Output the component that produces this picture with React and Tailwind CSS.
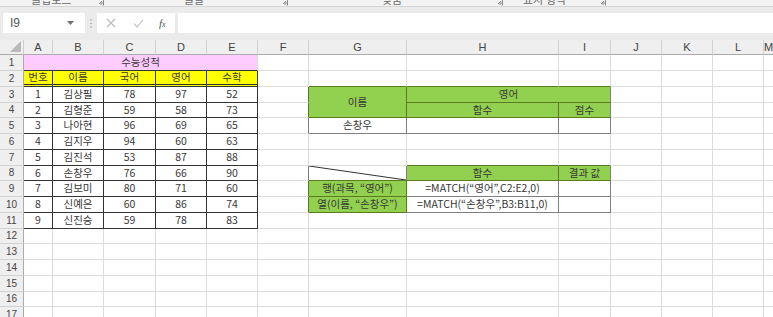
import React from 'react';

const COLS = ['A', 'B', 'C', 'D', 'E', 'F', 'G', 'H', 'I', 'J', 'K', 'L', 'M'];
const ROW_COUNT = 17;

const SCORES = [
  ['1', '김상필', '78', '97', '52'],
  ['2', '김형준', '59', '58', '73'],
  ['3', '나아현', '96', '69', '65'],
  ['4', '김지우', '94', '60', '63'],
  ['5', '김진석', '53', '87', '88'],
  ['6', '손창우', '76', '66', '90'],
  ['7', '김보미', '80', '71', '60'],
  ['8', '신예은', '60', '86', '74'],
  ['9', '신진승', '59', '78', '83'],
];

const TEXT = {
  A1: '수능성적',
  A2: '번호', B2: '이름', C2: '국어', D2: '영어', E2: '수학',
  G3: '이름', H3: '영어', H4: '함수', I4: '점수', G5: '손창우',
  H8: '함수', I8: '결과 값',
  G9: '행(과목, “영어”)', H9: '=MATCH(“영어”,C2:E2,0)',
  G10: '열(이름, “손창우”)', H10: '=MATCH(“손창우”,B3:B11,0)',
};
SCORES.forEach((row, i) => {
  row.forEach((v, j) => { TEXT[COLS[j] + (i + 3)] = v; });
});

// merged cells: covered cells are skipped
const SPAN = { A1: 'col-span-5', G3: 'row-span-2', H3: 'col-span-2' };
const COVERED = ['B1', 'C1', 'D1', 'E1', 'G4', 'I3'];

const GREEN = ['G3', 'H3', 'H4', 'I4', 'H8', 'I8', 'G9', 'G10'];

const RIGHT = {
  grid: 'border-r-[#dcdcdc]',
  t1: 'border-r-[#333333]',
  dark: 'border-r-[#808080]',
  olive: 'border-r-[#5b7b1e]',
};
const BOTTOM = {
  grid: 'border-b-[#dcdcdc]',
  t1: 'border-b-[#333333]',
  dbl: 'border-b-[3px] border-double border-b-[#333333]',
  dark: 'border-b-[#808080]',
  olive: 'border-b-[#5b7b1e]',
};

const OVERRIDE = {
  F3: { r: 'olive' }, F4: { r: 'olive' }, F5: { r: 'dark' },
  G2: { b: 'olive' }, H2: { b: 'olive' }, I2: { b: 'olive' },
  G3: { r: 'olive', b: 'olive' },
  H3: { r: 'dark', b: 'olive' },
  H4: { r: 'olive', b: 'olive' },
  I4: { r: 'dark', b: 'olive' },
  G5: { r: 'dark', b: 'dark' }, H5: { r: 'dark', b: 'dark' }, I5: { r: 'dark', b: 'dark' },
  H7: { b: 'olive' }, I7: { b: 'olive' },
  F8: { r: 'dark' }, F9: { r: 'olive' }, F10: { r: 'olive' },
  G8: { r: 'dark', b: 'olive' },
  H8: { r: 'olive', b: 'olive' },
  I8: { r: 'dark', b: 'olive' },
  G9: { r: 'olive', b: 'olive' },
  H9: { r: 'dark', b: 'dark' }, I9: { r: 'dark', b: 'dark' },
  G10: { r: 'olive', b: 'olive' },
  H10: { r: 'dark', b: 'dark' }, I10: { r: 'dark', b: 'dark' },
};

const cellBorders = (col, row, key) => {
  const c = COLS.indexOf(col);
  if (c <= 4 && row >= 2 && row <= 11) return { r: 't1', b: row === 2 ? 'dbl' : 't1' };
  if (key === 'A1') return { r: 'grid', b: 't1' };
  return { r: 'grid', b: 'grid', ...(OVERRIDE[key] || {}) };
};

const cellBg = (col, row, key) => {
  if (key === 'A1') return 'bg-[#ffccff]';
  if (row === 2 && COLS.indexOf(col) <= 4) return 'bg-[#ffff00]';
  if (GREEN.includes(key)) return 'bg-[#92d050]';
  return 'bg-white';
};

const Launcher = () => (
  <svg width="7" height="7" viewBox="0 0 7 7" className="mt-[-1px]">
    <path d="M0.5 0.5h6v6" fill="none" stroke="#8a8a8a" />
    <path d="M2 5l3-3M3 5h2v-2" fill="none" stroke="#8a8a8a" />
  </svg>
);

const Ribbon = () => (
  <div className="h-[7px] bg-[#f3f3f3] border-b border-[#d6d6d6] overflow-hidden flex text-[11px] leading-none text-[#6a6a6a]">
    <div className="w-[31px]" />
    <div className="w-[66px] mt-[-6px]">클립보드</div>
    <div className="w-[87px]"><Launcher /></div>
    <div className="w-[97px] mt-[-6px]">글꼴</div>
    <div className="w-[101px]"><Launcher /></div>
    <div className="w-[114px] mt-[-6px]">맞춤</div>
    <div className="w-[27px]"><Launcher /></div>
    <div className="w-[76px] mt-[-6px]">표시 형식</div>
    <div><Launcher /></div>
  </div>
);

const FormulaBar = () => (
  <div className="h-[33px] bg-[#ebebeb] flex items-start pt-[6px]">
    <div className="ml-[3px] w-[82px] h-[20px] bg-white flex items-center justify-between pl-[7px] pr-[11px]">
      <span className="text-[12px] text-[#555] font-['Liberation_Sans',sans-serif]">I9</span>
      <svg width="7" height="4" viewBox="0 0 7 4"><path d="M0 0h7L3.5 4z" fill="#707070" /></svg>
    </div>
    <div className="w-[12px] h-[20px] flex items-center justify-center">
      <svg width="2" height="9" viewBox="0 0 2 9">
        <circle cx="1" cy="1" r="0.8" fill="#a0a0a0" />
        <circle cx="1" cy="4.5" r="0.8" fill="#a0a0a0" />
        <circle cx="1" cy="8" r="0.8" fill="#a0a0a0" />
      </svg>
    </div>
    <div className="w-[78px] h-[20px] bg-white flex items-center">
      <svg width="10" height="10" viewBox="0 0 10 10" className="ml-[9px]">
        <path d="M1 1l8 8M9 1l-8 8" stroke="#b8b8b8" strokeWidth="1.1" />
      </svg>
      <svg width="11" height="9" viewBox="0 0 11 9" className="ml-[17px]">
        <path d="M1 4.5l3 3.5 6-7" fill="none" stroke="#b8b8b8" strokeWidth="1.1" />
      </svg>
      <span className="ml-[15px] text-[11px] italic text-[#555] font-['Liberation_Serif',serif]">f<span className="text-[8px]">x</span></span>
    </div>
    <div className="ml-[3px] flex-1 h-[20px] bg-white" />
  </div>
);

const Cell = ({ col, row }) => {
  const key = col + row;
  if (COVERED.includes(key)) return null;
  const br = cellBorders(col, row, key);
  const text = TEXT[key];
  return (
    <div
      className={`${SPAN[key] || ''} ${cellBg(col, row, key)} border-r border-b ${RIGHT[br.r]} ${BOTTOM[br.b]} relative flex items-center justify-center overflow-hidden whitespace-nowrap text-[10.5px] leading-none text-[#383838]`}
    >
      {key === 'G8' && (
        <svg className="absolute inset-0 w-full h-full" preserveAspectRatio="none" viewBox="0 0 100 100">
          <line x1="0" y1="0" x2="100" y2="100" stroke="#333" strokeWidth="1" vectorEffect="non-scaling-stroke" />
        </svg>
      )}
      {text}
    </div>
  );
};

const Sheet = () => {
  const rows = Array.from({ length: ROW_COUNT }, (_, i) => i + 1);
  return (
    <div className="grid grid-cols-[24px_29px_51px_52px_51px_51px_51px_98px_152px_52px_51px_51px_51px_1fr] grid-rows-[15px_16px_16px_16px_15px_16px_16px_16px_15px_16px_16px_16px_15px_16px_16px_16px_15px_16px]">
      {/* header row */}
      <div className="bg-[#efefef] border-r border-b border-r-[#cfcfcf] border-b-[#ababab] relative">
        <svg width="11" height="11" viewBox="0 0 11 11" className="absolute right-[2px] bottom-[2px]">
          <path d="M11 0v11H0z" fill="#b9b9b9" />
        </svg>
      </div>
      {COLS.map((c) => (
        <div
          key={c}
          className="bg-[#efefef] border-r border-b border-r-[#d2d2d2] border-b-[#ababab] flex items-center justify-center text-[11px] leading-none text-[#444] font-['Liberation_Sans',sans-serif]"
        >
          {c}
        </div>
      ))}
      {rows.map((r) => (
        <React.Fragment key={r}>
          <div className="bg-[#efefef] border-r border-b border-r-[#ababab] border-b-[#d2d2d2] flex items-center justify-center text-[10px] leading-none text-[#444] font-['Liberation_Sans',sans-serif]">
            {r}
          </div>
          {COLS.map((c) => (
            <Cell key={c} col={c} row={r} />
          ))}
        </React.Fragment>
      ))}
    </div>
  );
}

export default function App() {
  return (
    <div className="w-[773px] h-[317px] overflow-hidden bg-white font-['Noto_Sans_CJK_KR','Noto_Sans',sans-serif]">
      <Ribbon />
      <FormulaBar />
      <Sheet />
    </div>
  );
}
